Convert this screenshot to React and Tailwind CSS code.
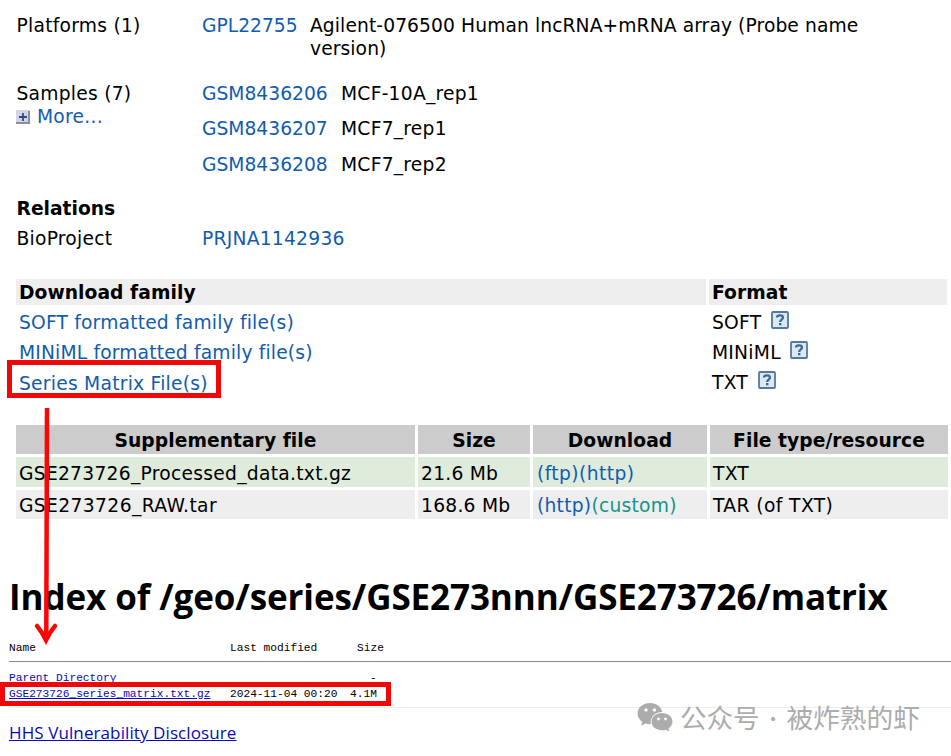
import React from "react";

const samples = [
  { id: "GSM8436206", name: "MCF-10A_rep1" },
  { id: "GSM8436207", name: "MCF7_rep1" },
  { id: "GSM8436208", name: "MCF7_rep2" },
];

const App = () => {

  return (

    <div className="relative w-[951px] h-[756px] overflow-hidden bg-white text-black font-['DejaVu_Sans',sans-serif] text-[18.7px] leading-[23px] tracking-[0.24px]">

      {/* PLATFORMS */}

      <div className="flex pt-[14px] pl-[16.5px]">
        <div className="w-[185.5px]">Platforms (1)</div>
        <div className="w-[108px] tracking-normal"><Link>GPL22755</Link></div>
        <div className="whitespace-nowrap">
          <p className="tracking-[0.09px]">Agilent-076500 Human lncRNA+mRNA array (Probe name</p>
          <p className="tracking-[0.09px]">version)</p>
        </div>
      </div>

      {/* SAMPLES */}

      <div className="flex pt-[22px] pl-[16.5px]">
        <div className="w-[185.5px]">
          <p>Samples (7)</p>
          <div className="flex items-center -ml-[0.5px]">
            <PlusIcon/>
            <Link>More...</Link>
          </div>
        </div>
        <div className="space-y-[12.4px]">
          {samples.map((s) => (
            <div key={s.id} className="flex">
              <div className="w-[139px] tracking-normal"><Link>{s.id}</Link></div>
              <div>{s.name}</div>
            </div>
          ))}
        </div>
      </div>

      {/* RELATIONS */}

      <div className="pl-[16.5px] pt-[21px]">
        <h3 className="font-bold tracking-normal">Relations</h3>
        <div className="flex pt-[7px]">
          <div className="w-[185.5px]">BioProject</div>
          <Link>PRJNA1142936</Link>
        </div>
      </div>

      {/* DOWNLOAD FAMILY */}

      <div className="grid grid-cols-[690px_238px] gap-x-[3px] ml-4 mt-[29px]">
        <div className="bg-[#eeeeee] h-[26px] pl-[3px] leading-[27px] font-bold tracking-[0.05px]">Download family</div>
        <div className="bg-[#eeeeee] h-[26px] pl-[3px] leading-[27px] font-bold tracking-[0.05px]">Format</div>
        <div className="pl-[3px] pt-[6px] h-[30px] tracking-[0.18px]"><Link>SOFT formatted family file(s)</Link></div>
        <Format name="SOFT"/>
        <div className="pl-[3px] pt-[6px] h-[30px] tracking-[0.16px]"><Link>MINiML formatted family file(s)</Link></div>
        <Format name="MINiML"/>
        <div className="pl-[3px] pt-[7px] h-[30px]"><Link>Series Matrix File(s)</Link></div>
        <Format name="TXT"/>
      </div>

      {/* SUPPLEMENTARY FILES */}

      <div className="grid grid-cols-[399px_112px_174px_238px] grid-rows-[29px_30px_29px] gap-[3px] ml-4 mt-[30px] leading-[32px]">
        <HeadCell>Supplementary file</HeadCell>
        <HeadCell>Size</HeadCell>
        <HeadCell>Download</HeadCell>
        <HeadCell>File type/resource</HeadCell>

        <div className="bg-[#dfebdb] pl-[3px] leading-[33px] tracking-[0.27px]">GSE273726_Processed_data.txt.gz</div>
        <div className="bg-[#dfebdb] pl-[3px] leading-[33px]">21.6 Mb</div>
        <div className="bg-[#dfebdb] pl-1 leading-[33px] tracking-[0.4px]"><Link>(ftp)</Link><Link>(http)</Link></div>
        <div className="bg-[#dfebdb] pl-[3px] leading-[33px]">TXT</div>

        <div className="bg-[#eeeeee] pl-[3px] tracking-[0.38px]">GSE273726_RAW.tar</div>
        <div className="bg-[#eeeeee] pl-[3px]">168.6 Mb</div>
        <div className="bg-[#eeeeee] pl-1"><Link>(http)</Link><span className="text-[#14958a]">(custom)</span></div>
        <div className="bg-[#eeeeee] pl-[3px] tracking-[0.4px]">TAR (of TXT)</div>
      </div>

      {/* DIRECTORY INDEX */}

      <h1 className="pl-[9px] mt-[53px] h-[50px] leading-[50px] whitespace-nowrap font-['Open_Sans',sans-serif] font-bold text-[35px] tracking-[-0.1px]">
        Index of /geo/series/GSE273nnn/GSE273726/matrix
      </h1>

      <div className="pl-[9px] mt-[18px] font-['Liberation_Mono',monospace] text-[11.2px] leading-4 tracking-normal">
        <div className="flex">
          <span className="w-[221px]">Name</span>
          <span className="w-[127px]">Last modified</span>
          <span>Size</span>
        </div>
        <hr className="border-[#8c8c8c] mt-[5px] mb-[8px]"/>
        <div className="flex">
          <span className="w-[361px]"><Anchor>Parent Directory</Anchor></span>
          <span>-</span>
        </div>
        <div className="flex">
          <span className="w-[221px]"><Anchor>GSE273726_series_matrix.txt.gz</Anchor></span>
          <span className="w-[120px]">2024-11-04 00:20</span>
          <span>4.1M</span>
        </div>
        <hr className="border-[#eeeeee] mt-[5px]"/>
      </div>

      <div className="pl-[9px] mt-[13px] font-['Open_Sans',sans-serif] text-[17px] leading-6 tracking-[0.1px]">
        <Anchor>HHS Vulnerability Disclosure</Anchor>
      </div>

      {/* ANNOTATIONS */}

      <div className="absolute left-[7px] top-[360px] w-[214px] h-[38px] border-[5px] border-[#ee0808]"/>
      <div className="absolute left-0 top-[682px] w-[391px] h-[24px] border-[5px] border-[#ee0808]"/>

      <svg className="absolute left-[32px] top-[408px]" width="30" height="238" viewBox="0 0 30 238">
        <path d="M15 0 L14.3 228" stroke="#fb0505" strokeWidth="4.5" fill="none"/>
        <path d="M5 218 L14 230 L23 218" stroke="#fb0505" strokeWidth="4.5" strokeLinecap="round" fill="none"/>
        <path d="M5 220 L14 237 L23 220 L14 227 Z" fill="#fb0505"/>
      </svg>

      {/* WATERMARK */}

      <div className="absolute left-[637px] top-[701px] flex items-center text-[#acacac] tracking-normal">
        <WechatIcon/>
        <span className="ml-[7px] whitespace-nowrap font-['Noto_Sans_CJK_SC',sans-serif] text-[26.5px] leading-8">公众号</span>
        <span className="w-[27px] text-center font-['Noto_Sans_CJK_SC',sans-serif]">·</span>
        <span className="whitespace-nowrap font-['Noto_Sans_CJK_SC',sans-serif] text-[26.7px] leading-8">被炸熟的虾</span>
      </div>

    </div>

  );

};

export default App;

/* LINKS */

const Link = ({children}) => (
  <a className="text-[#115cb0]">{children}</a>
);

const Anchor = ({children}) => (
  <a className="text-[#0808c0] underline">{children}</a>
);

/* TABLE CELLS */

const HeadCell = ({children}) => (
  <div className="bg-[#cccccc] text-center font-bold leading-[31px] tracking-[0.05px]">{children}</div>
);

const Format = ({name}) => (
  <div className="flex items-start gap-[9.5px] pl-[3px] pt-[6px] h-[30px]">
    {name}
    <HelpIcon/>
  </div>
);

/* ICONS */

const PlusIcon = () => (
  <svg className="mr-[7px]" width="14" height="14" viewBox="0 0 14 14">
    <rect width="14" height="14" fill="#d3d5e4"/>
    <path d="M13 1V13H0" stroke="#8d8d9b" strokeWidth="2" fill="none"/>
    <path d="M3 7H11M7 3V11" stroke="#294d8b" strokeWidth="1.8"/>
  </svg>
);

const HelpIcon = () => (
  <svg width="18" height="18" viewBox="0 0 18 18">
    <rect x="1" y="1" width="16" height="16" rx="1" fill="#d9eaf6" stroke="#54799c" strokeWidth="1.8"/>
    <path d="M6 6.6C6 3.6 12 3.6 12 6.6C12 8.8 9.2 8.6 9.2 11" stroke="#42668c" strokeWidth="2.3" fill="none"/>
    <rect x="8" y="12" width="2.4" height="2.3" fill="#42668c"/>
  </svg>
);

const WechatIcon = () => (
  <svg width="36" height="30" viewBox="0 0 36 30">
    <path d="M13.2 1C6 1 .6 5.6 .6 11.5C.6 15 2.5 18 5.3 20L4.2 23.8L8.5 21.5C10 22 12 22.3 13.8 22.2C12.5 15.5 18 10 25.3 10C24.3 4.8 19.3 1 13.2 1Z" fill="#acacac"/>
    <path d="M25 11C19 11 14.5 14.9 14.5 19.6C14.5 24.5 19 28.3 25 28.3C26.4 28.3 27.7 28.1 29 27.7L32.4 29.5L31.5 26.4C34 24.7 35.5 22.3 35.5 19.6C35.5 14.9 31 11 25 11Z" fill="#acacac"/>
    <circle cx="9" cy="8" r="1.7" fill="#fff"/>
    <circle cx="17.4" cy="8" r="1.7" fill="#fff"/>
    <circle cx="21.5" cy="17" r="1.4" fill="#fff"/>
    <circle cx="28.5" cy="17" r="1.4" fill="#fff"/>
  </svg>
);
